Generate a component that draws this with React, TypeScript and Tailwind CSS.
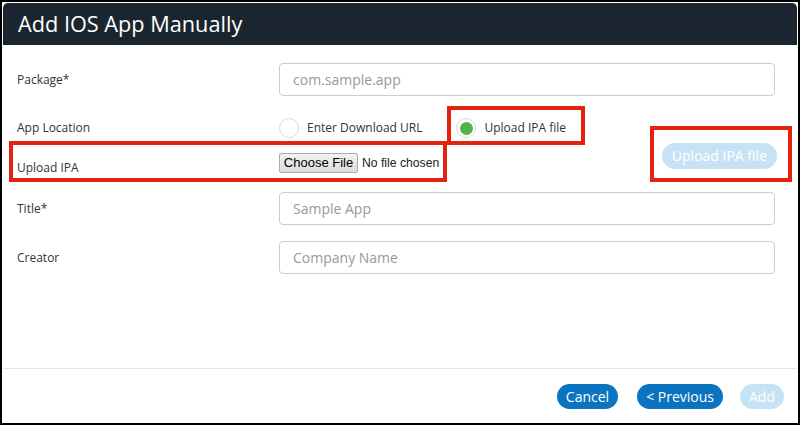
import type { ReactNode } from "react"

const sans = "font-['Open_Sans',sans-serif]"

function Radio({ checked, label }: { checked?: boolean; label: string }) {
  return (
    <label className="flex items-center gap-2">
      <span className="flex h-5 w-5 items-center justify-center rounded-full border border-[#d9d9d9] bg-white">
        {checked && <span className="h-[13px] w-[13px] rounded-full bg-[#52b447]" />}
      </span>
      <span className="text-[12px] text-[#333]">{label}</span>
    </label>
  )
}

function TextInput({ placeholder }: { placeholder: string }) {
  return (
    <input
      placeholder={placeholder}
      className="h-[33px] w-full rounded-[4px] border border-[#cccccc] px-[13px] text-[14px] text-[#333] outline-none placeholder:text-[#999]"
    />
  )
}

function Row({ label, children, className = "" }: { label: string; children: ReactNode; className?: string }) {
  return (
    <div className={`flex items-center ${className}`}>
      <div className="w-[262px] shrink-0 text-[12px] text-[#333]">{label}</div>
      <div className="flex-1">{children}</div>
    </div>
  )
}

function Pill({ children, disabled, className = "" }: { children: ReactNode; disabled?: boolean; className?: string }) {
  return (
    <button
      className={`h-[25px] rounded-full px-[9px] text-[14px] leading-none text-white ${
        disabled ? "bg-[#c6e3f6]" : "bg-[#0b74c1]"
      } ${className}`}
    >
      {children}
    </button>
  )
}

export default function App() {
  return (
    <div className={`relative h-[425px] w-[800px] border-2 border-black bg-white p-px ${sans}`}>
      <div className="flex h-full flex-col">
        {/* Header */}
        <div className="flex h-[42px] shrink-0 items-center rounded-t-[5px] bg-[#1b2530] pl-[15px]">
          <h1 className="text-[21.7px] text-white">Add IOS App Manually</h1>
        </div>

        {/* Form */}
        <div className="flex-1 pl-[14px] pr-[22px] pt-[18px]">
          <Row label="Package*">
            <TextInput placeholder="com.sample.app" />
          </Row>

          <Row label="App Location" className="mt-[22px] h-5">
            <div className="flex items-center gap-[34px]">
              <Radio label="Enter Download URL" />
              <Radio checked label="Upload IPA file" />
            </div>
          </Row>

          <div className="mt-[5px] flex h-[30px]">
            <div className="w-[262px] shrink-0 pt-[16px] text-[12px] text-[#333]">Upload IPA</div>
            <div className="flex flex-1 items-end justify-between">
              <div className="flex items-center gap-[4px] font-['Liberation_Sans',Arial,sans-serif] text-[13px]">
                <span className="flex h-5 w-[79px] items-center justify-center rounded-[2px] border border-[#adadad] bg-gradient-to-b from-[#f3f3f3] to-[#dcdcdc] text-black">
                  Choose File
                </span>
                <span className="text-[12.2px] text-[#222]">No file chosen</span>
              </div>
              <div className="mb-[4px] self-start">
                <button className="-mr-[2px] h-[26px] rounded-full bg-[#c6e3f6] px-[10px] text-[14px] leading-none text-white">
                  Upload IPA file
                </button>
              </div>
            </div>
          </div>

          <Row label="Title*" className="mt-[19px]">
            <TextInput placeholder="Sample App" />
          </Row>

          <Row label="Creator" className="mt-[16px]">
            <TextInput placeholder="Company Name" />
          </Row>
        </div>

        {/* Footer */}
        <div className="flex shrink-0 justify-end border-t border-[#e5e5e5] pb-[13px] pr-[13px] pt-[15px]">
          <Pill>Cancel</Pill>
          <Pill className="ml-[19px]">&lt; Previous</Pill>
          <Pill disabled className="ml-[17px]">Add</Pill>
        </div>
      </div>

      {/* Annotation boxes */}
      <div className="absolute left-[445px] top-[104px] h-[39px] w-[138px] border-4 border-[#e3230b]" />
      <div className="absolute left-[7px] top-[139px] h-[41px] w-[438px] border-4 border-[#e3230b]" />
      <div className="absolute left-[648px] top-[124px] h-[56px] w-[142px] border-4 border-[#e3230b]" />
    </div>
  )
}
